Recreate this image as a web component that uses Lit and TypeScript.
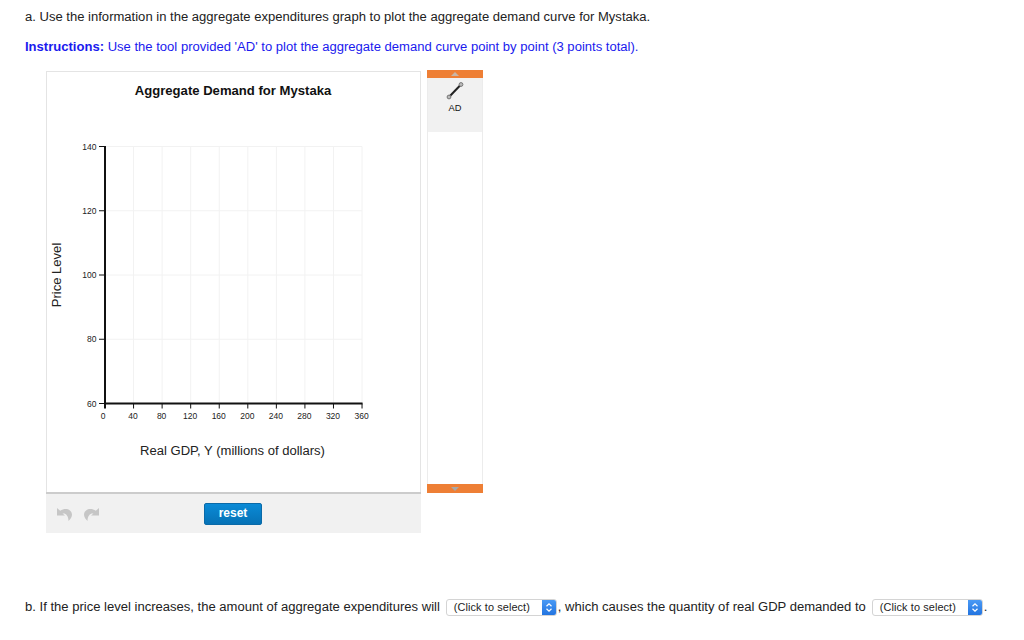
import { LitElement, html, css, svg } from 'lit';
import { customElement } from 'lit/decorators.js';

const X0 = 105;
const Y0 = 403.5;
const STEP_X = 28.56;
const STEP_Y = 64.25;
const xTicks = [0, 40, 80, 120, 160, 200, 240, 280, 320, 360];
const yTicks = [60, 80, 100, 120, 140];

@customElement('app-root')
export class AppRoot extends LitElement {
  static styles = css`
    :host {
      display: block;
      width: 1024px;
      height: 640px;
      background: #fff;
      overflow: hidden;
      font-family: 'Liberation Sans', Arial, sans-serif;
      font-size: 13.06px;
      color: #222;
    }
    .page {
      display: flex;
      flex-direction: column;
      padding: 10px 0 0 25px;
    }
    .line {
      line-height: 14px;
      white-space: nowrap;
    }
    .instructions {
      margin-top: 16px;
      color: #1a1aee;
    }
    .tool-row {
      display: flex;
      align-items: flex-start;
      gap: 6px;
      margin: 16px 0 0 21px;
    }
    .graph-panel {
      width: 375px;
      height: 462px;
      margin-top: 1px;
      box-sizing: border-box;
      border: 1px solid #e4e4e4;
      border-bottom: 0;
      display: flex;
      flex-direction: column;
    }
    .graph-area {
      flex: 1;
      display: flex;
      flex-direction: column;
      min-height: 0;
    }
    .chart-title {
      margin-top: 12px;
      padding-right: 1px;
      text-align: center;
      font-weight: bold;
      font-size: 13.1px;
      line-height: 14px;
      color: #111;
    }
    .chart {
      display: block;
      margin: -1px 0 0 -1px;
    }
    .chart text {
      font-family: 'Liberation Sans', Arial, sans-serif;
      fill: #222;
    }
    .footer {
      height: 41px;
      flex: none;
      box-sizing: border-box;
      background: #f1f1f1;
      border-top: 2px solid #ccc;
      margin: 0 -1px;
      display: flex;
      align-items: center;
      position: relative;
    }
    .undo {
      display: flex;
      gap: 12px;
      margin-left: 11px;
    }
    .reset {
      position: absolute;
      left: 158px;
      top: 9px;
      width: 58px;
      height: 22px;
      padding: 0 0 2px;
      border: 1px solid #0a6aa8;
      border-radius: 2px;
      background: linear-gradient(#0a8ad6, #0672b6);
      color: #fff;
      font: bold 12px 'Liberation Sans', Arial, sans-serif;
    }
    .palette {
      width: 56px;
      height: 423px;
      box-sizing: border-box;
      border: 1px solid #ececec;
      border-width: 0 1px;
      display: flex;
      flex-direction: column;
    }
    .scroll {
      height: 8px;
      flex: none;
      margin: 0 -1px;
      background: #ee7f35;
      display: flex;
      align-items: center;
      justify-content: center;
    }
    .scroll.bottom {
      height: 9px;
      margin-top: auto;
    }
    .arrow-up {
      width: 0;
      height: 0;
      border: 4px solid transparent;
      border-top: 0;
      border-bottom: 4px solid #c9b5a5;
    }
    .arrow-down {
      width: 0;
      height: 0;
      border: 4px solid transparent;
      border-bottom: 0;
      border-top: 4px solid #a8a8a8;
    }
    .tool {
      height: 54px;
      background: #f1f1f1;
      display: flex;
      flex-direction: column;
      align-items: center;
      padding-top: 4px;
      box-sizing: border-box;
      font-size: 9.3px;
      color: #111;
      line-height: 10px;
    }
    .tool svg {
      display: block;
      margin-bottom: 3px;
    }
    .question {
      display: flex;
      align-items: center;
      margin-top: 64px;
      height: 20px;
      white-space: pre;
    }
    .select {
      display: inline-flex;
      align-items: stretch;
      width: 111px;
      height: 17px;
      margin: 0 1px 0 6px;
      box-sizing: border-box;
      border: 1px solid #d4d4d4;
      border-radius: 3px;
      background: #fff;
      font-size: 10.9px;
      letter-spacing: 0.1px;
      color: #222;
      overflow: hidden;
    }
    .select span {
      flex: 1;
      padding-left: 7px;
      line-height: 15px;
    }
    .select i {
      width: 14px;
      flex: none;
      background: linear-gradient(#4a9af5, #2374e0);
      display: flex;
      align-items: center;
      justify-content: center;
    }
  `;

  private renderChart() {
    const lastX = X0 + STEP_X * 9;
    const topY = Y0 - STEP_Y * 4;
    return html`<svg class="chart" width="375" height="380" viewBox="46 97 375 380">
      ${xTicks.slice(1).map((t, i) => {
        const x = X0 + STEP_X * (i + 1);
        return svg`<line x1=${x} y1=${topY} x2=${x} y2=${Y0} stroke="#f2f2f2" />
          <line x1=${x} y1=${Y0} x2=${x} y2=${Y0 + 5} stroke="#111" />
          <text x=${x - 0.5} y="418.500" font-size="8.500" text-anchor="middle">${t}</text>`;
      })}
      ${yTicks.map((t, i) => {
        const y = Y0 - STEP_Y * i;
        return svg`${i > 0
          ? svg`<line x1=${X0} y1=${y} x2=${lastX} y2=${y} stroke="#f2f2f2" />`
          : ''}
          <line x1="99" y1=${y} x2=${X0} y2=${y} stroke="#111" />
          <text x="96.500" y=${y + 3} font-size="8.500" text-anchor="end">${t}</text>`;
      })}
      <text x=${X0 - 2} y="418.500" font-size="8.500" text-anchor="middle">0</text>
      <line x1=${X0} y1=${topY - 0.5} x2=${X0} y2=${Y0 + 5} stroke="#111" stroke-width="2" />
      <line x1=${X0 - 1} y1=${Y0} x2=${lastX + 0.5} y2=${Y0} stroke="#111" stroke-width="2" />
      <text x="232.500" y="455" font-size="13.060" text-anchor="middle">Real GDP, Y (millions of dollars)</text>
      <text transform="translate(61 275) rotate(-90)" font-size="13.060" text-anchor="middle">Price Level</text>
    </svg>`;
  }

  private renderChevrons() {
    return html`<svg width="8" height="11" viewBox="0 0 8 11" fill="none" stroke="#fff" stroke-width="1.200">
      <path d="M1.500 4.200 4 1.800 6.500 4.200M1.500 6.800 4 9.200 6.500 6.800" />
    </svg>`;
  }

  render() {
    return html`<div class="page">
      <div class="line">a. Use the information in the aggregate expenditures graph to plot the aggregate demand curve for Mystaka.</div>
      <div class="line instructions"><b>Instructions:</b> Use the tool provided 'AD' to plot the aggregate demand curve point by point (3 points total).</div>
      <div class="tool-row">
        <div class="graph-panel">
          <div class="graph-area">
            <div class="chart-title">Aggregate Demand for Mystaka</div>
            ${this.renderChart()}
          </div>
          <div class="footer">
            <div class="undo">
              <svg width="15" height="14" viewBox="0 0 15 14" fill="#c6c6c6">
                <path d="M0 1v7.500h8L5.500 6.500C8.500 5.800 11.500 8.500 11.500 14 13.500 12 15 10 15 7.500 14.500 2 8 .5 3.200 3.800z" />
              </svg>
              <svg width="15" height="14" viewBox="0 0 15 14" fill="#c6c6c6">
                <path d="M15 1v7.500H7L9.500 6.500C6.500 5.800 3.500 8.500 3.500 14 1.500 12 0 10 0 7.500 .5 2 7 .5 11.800 3.800z" />
              </svg>
            </div>
            <button class="reset">reset</button>
          </div>
        </div>
        <div class="palette">
          <div class="scroll"><div class="arrow-up"></div></div>
          <div class="tool">
            <svg width="18" height="18" viewBox="0 0 18 18" fill="none">
              <line x1="3" y1="15" x2="15" y2="2.500" stroke="#222" stroke-width="2" />
              <circle cx="3" cy="15" r="1.900" fill="#bbb" stroke="#777" />
              <circle cx="15" cy="2.500" r="1.900" fill="#bbb" stroke="#777" />
            </svg>
            AD
          </div>
          <div class="scroll bottom"><div class="arrow-down"></div></div>
        </div>
      </div>
      <div class="line question">b. If the price level increases, the amount of aggregate expenditures will<div class="select"><span>(Click to select)</span><i>${this.renderChevrons()}</i></div>, which causes the quantity of real GDP demanded to<div class="select"><span>(Click to select)</span><i>${this.renderChevrons()}</i></div>.</div>
    </div>`;
  }
}
